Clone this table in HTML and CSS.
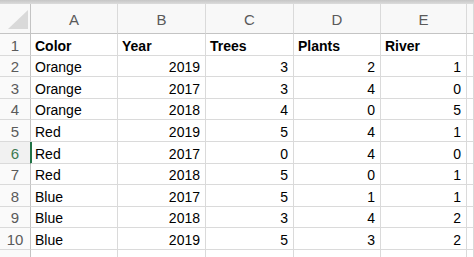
FILE: index.html
```html
<!DOCTYPE html>
<html>
<head>
<meta charset="utf-8">
<link rel="stylesheet" href="styles.css">
</head>
<body>
<div class="sheet">
  <div class="topbar"></div>
  <div class="row head">
    <div class="cell corner"><svg class="tri" width="20" height="19" viewBox="0 0 20 19"><polygon points="0,19 20,19 20,0" fill="#d9d9d9"/></svg></div>
    <div class="cell colh">A</div>
    <div class="cell colh">B</div>
    <div class="cell colh">C</div>
    <div class="cell colh">D</div>
    <div class="cell colh">E</div>
    <div class="cell colh"></div>
  </div>
  <div class="row">
    <div class="cell rowh">1</div>
    <div class="cell txt b">Color</div>
    <div class="cell txt b">Year</div>
    <div class="cell txt b">Trees</div>
    <div class="cell txt b">Plants</div>
    <div class="cell txt b">River</div>
    <div class="cell"></div>
  </div>
  <div class="row">
    <div class="cell rowh">2</div>
    <div class="cell txt">Orange</div>
    <div class="cell num">2019</div>
    <div class="cell num">3</div>
    <div class="cell num">2</div>
    <div class="cell num">1</div>
    <div class="cell"></div>
  </div>
  <div class="row">
    <div class="cell rowh">3</div>
    <div class="cell txt">Orange</div>
    <div class="cell num">2017</div>
    <div class="cell num">3</div>
    <div class="cell num">4</div>
    <div class="cell num">0</div>
    <div class="cell"></div>
  </div>
  <div class="row">
    <div class="cell rowh">4</div>
    <div class="cell txt">Orange</div>
    <div class="cell num">2018</div>
    <div class="cell num">4</div>
    <div class="cell num">0</div>
    <div class="cell num">5</div>
    <div class="cell"></div>
  </div>
  <div class="row">
    <div class="cell rowh">5</div>
    <div class="cell txt">Red</div>
    <div class="cell num">2019</div>
    <div class="cell num">5</div>
    <div class="cell num">4</div>
    <div class="cell num">1</div>
    <div class="cell"></div>
  </div>
  <div class="row">
    <div class="cell rowh sel">6</div>
    <div class="cell txt selcell">Red</div>
    <div class="cell num">2017</div>
    <div class="cell num">0</div>
    <div class="cell num">4</div>
    <div class="cell num">0</div>
    <div class="cell"></div>
  </div>
  <div class="row">
    <div class="cell rowh">7</div>
    <div class="cell txt">Red</div>
    <div class="cell num">2018</div>
    <div class="cell num">5</div>
    <div class="cell num">0</div>
    <div class="cell num">1</div>
    <div class="cell"></div>
  </div>
  <div class="row">
    <div class="cell rowh">8</div>
    <div class="cell txt">Blue</div>
    <div class="cell num">2017</div>
    <div class="cell num">5</div>
    <div class="cell num">1</div>
    <div class="cell num">1</div>
    <div class="cell"></div>
  </div>
  <div class="row">
    <div class="cell rowh">9</div>
    <div class="cell txt">Blue</div>
    <div class="cell num">2018</div>
    <div class="cell num">3</div>
    <div class="cell num">4</div>
    <div class="cell num">2</div>
    <div class="cell"></div>
  </div>
  <div class="row">
    <div class="cell rowh">10</div>
    <div class="cell txt">Blue</div>
    <div class="cell num">2019</div>
    <div class="cell num">5</div>
    <div class="cell num">3</div>
    <div class="cell num">2</div>
    <div class="cell"></div>
  </div>
  <div class="row">
    <div class="cell rowh">11</div>
    <div class="cell"></div>
    <div class="cell"></div>
    <div class="cell"></div>
    <div class="cell"></div>
    <div class="cell"></div>
    <div class="cell"></div>
  </div>
</div>
</body>
</html>
```

FILE: styles.css
```css
html, body {
  margin: 0;
  padding: 0;
  background: #ffffff;
}
body {
  width: 474px;
  height: 257px;
  overflow: hidden;
  font-family: "Liberation Sans", Arial, sans-serif;
  font-size: 14px;
  color: #000;
}
.sheet {
  display: flex;
  flex-direction: column;
}
.topbar {
  height: 4px;
  background: linear-gradient(#c6c6c6, #dcdcdc);
}
.row {
  display: grid;
  grid-template-columns: 31px 87px 88px 88px 87px 86px 1fr;
  height: 21.6px;
}
.row.head {
  height: 30px;
}
.cell {
  box-sizing: border-box;
  border-right: 1px solid #dadada;
  border-bottom: 1px solid #dadada;
  display: flex;
  align-items: flex-end;
  line-height: 16px;
  padding-bottom: 1px;
  white-space: nowrap;
  overflow: hidden;
}
.head .cell {
  background: #f8f8f8;
  border-bottom-color: #c4c4c4;
  justify-content: center;
  padding-bottom: 5px;
  color: #5a5a5a;
  font-size: 15px;
}
.head .corner {
  border-right-color: #c4c4c4;
  align-items: flex-start;
  justify-content: flex-start;
  padding: 0;
}
.tri {
  display: block;
  margin: 6px 0 0 8px;
}
.rowh {
  justify-content: center;
  color: #5a5a5a;
  font-size: 15px;
  background: #fafafa;
  border-right-color: #c4c4c4;
}
.rowh.sel {
  color: #3d7a52;
  background: #f1f1f1;
  border-right: 1px solid #217346;
}
.selcell {
  box-shadow: inset 1px 0 0 #217346;
}
.txt {
  padding-left: 4px;
}
.b {
  font-weight: bold;
}
.num {
  justify-content: flex-end;
  padding-right: 5px;
}
```
